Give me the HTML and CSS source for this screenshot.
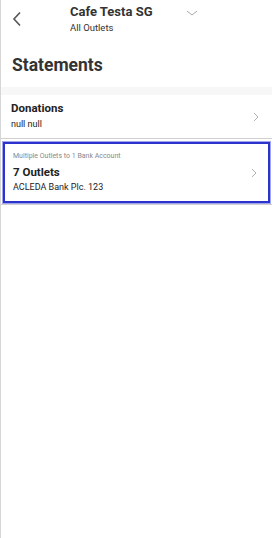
FILE: index.html
```html
<!DOCTYPE html>
<html>
<head>
<meta charset="utf-8">
<link rel="stylesheet" href="styles.css">
</head>
<body>
<div class="page">
  <header class="topbar">
    <button class="back" aria-label="Back">
      <svg width="10" height="16" viewBox="0 0 10 16"><path d="M8 1.5 L2 8 L8 14.5" fill="none" stroke="#555" stroke-width="1.6"/></svg>
    </button>
    <div class="store">
      <div class="store-name">Cafe Testa SG</div>
      <div class="store-sub">All Outlets</div>
    </div>
    <svg class="dropdown" width="12" height="6" viewBox="0 0 12 6"><path d="M1 1 L6 5 L11 1" fill="none" stroke="#a4aab0" stroke-width="1"/></svg>
  </header>
  <h1 class="title">Statements</h1>
  <div class="gap"></div>
  <div class="list">
    <div class="row">
      <div class="row-body">
        <div class="row-title">Donations</div>
        <div class="row-sub">null null</div>
      </div>
      <svg class="chev" width="6" height="10" viewBox="0 0 6 10"><path d="M1 1 L5 5 L1 9" fill="none" stroke="#b0b0b0" stroke-width="1"/></svg>
    </div>
    <div class="row selected">
      <div class="row-body">
        <div class="row-caption">Multiple Outlets to 1 Bank Account</div>
        <div class="row-title">7 Outlets</div>
        <div class="row-sub">ACLEDA Bank Plc. 123</div>
      </div>
      <svg class="chev" width="6" height="10" viewBox="0 0 6 10"><path d="M1 1 L5 5 L1 9" fill="none" stroke="#b0b0b0" stroke-width="1"/></svg>
    </div>
  </div>
</div>
</body>
</html>
```
FILE: styles.css
```css
html, body { margin: 0; padding: 0; background: #fff; }
body { font-family: Roboto, "Noto Sans", Arial, sans-serif; color: #222; }
.page {
  width: 272px;
  min-height: 538px;
  border-left: 1px solid #d6d6d6;
  box-sizing: border-box;
}
.topbar {
  display: flex;
  align-items: flex-start;
  height: 40px;
  padding-top: 4px;
  box-sizing: border-box;
}
.back {
  border: 0; background: none; padding: 0;
  margin: 7px 0 0 11px;
  width: 10px; height: 16px;
  display: flex;
}
.store { margin-left: 48px; }
.store-name { font-size: 13px; font-weight: 700; color: #333; line-height: 16px; }
.store-sub { font-size: 9.5px; color: #333; line-height: 12px; margin-top: 2px; }
.dropdown { margin: 6px 0 0 33px; }
.title {
  margin: 13px 0 0 11px;
  font-size: 17.5px;
  font-weight: 700;
  color: #333;
  line-height: 24px;
  height: 34px;
}
.gap { height: 8px; background: #f7f7f7; }
.list::after { content: ""; display: block; height: 1px; background: #d0d0d0; }
.row {
  display: flex;
  align-items: center;
  background: #fff;
  padding: 0 10px;
  border-bottom: 1px solid #cfcfcf;
  height: 44px;
  box-sizing: border-box;
}
.row-body { flex: 1; align-self: flex-start; padding-top: 6px; }
.row-title { font-size: 11.5px; font-weight: 700; color: #222; line-height: 15px; }
.row-sub { font-size: 9px; color: #222; line-height: 12px; margin-top: 2px; }
.row-caption { font-size: 7px; color: #888; line-height: 9px; margin-bottom: 4px; }
.chev { margin-right: 3px; }
.row.selected {
  margin: 3px 2px 1px 2px;
  height: 61px;
  border: 2px solid #2c33cc;
  box-shadow: 0 0 0 1px #a0a5ec;
  padding: 0 8px;
}
.row.selected .row-body { padding-top: 8px; }
.row.selected .row-sub { margin-top: 1px; }
```
